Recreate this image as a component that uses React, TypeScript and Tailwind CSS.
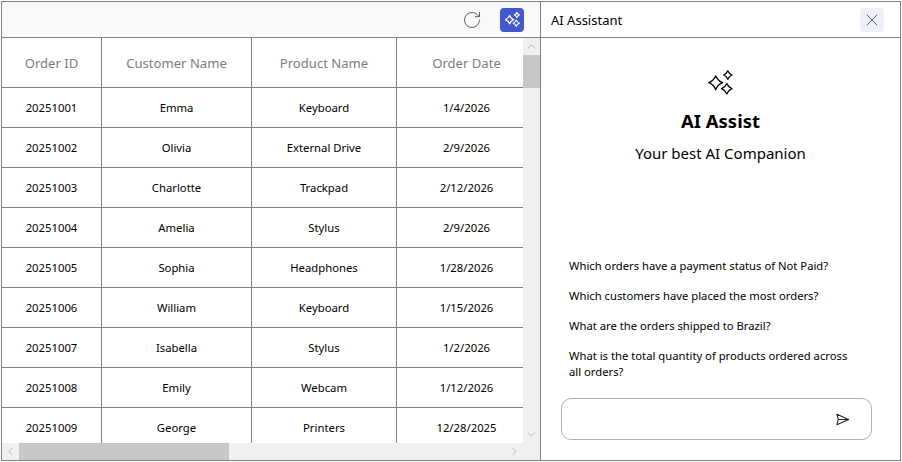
import { ChevronDown, ChevronLeft, ChevronRight, ChevronUp, RotateCw, X } from "lucide-react";

const rows = [
  ["20251001", "Emma", "Keyboard", "1/4/2026"],
  ["20251002", "Olivia", "External Drive", "2/9/2026"],
  ["20251003", "Charlotte", "Trackpad", "2/12/2026"],
  ["20251004", "Amelia", "Stylus", "2/9/2026"],
  ["20251005", "Sophia", "Headphones", "1/28/2026"],
  ["20251006", "William", "Keyboard", "1/15/2026"],
  ["20251007", "Isabella", "Stylus", "1/2/2026"],
  ["20251008", "Emily", "Webcam", "1/12/2026"],
  ["20251009", "George", "Printers", "12/28/2025"],
];

const prompts = [
  "Which orders have a payment status of Not Paid?",
  "Which customers have placed the most orders?",
  "What are the orders shipped to Brazil?",
  "What is the total quantity of products ordered across all orders?",
];

// four-point star with slightly hollow sides
function star(x: number, y: number, r: number) {
  const c = r * 0.28;
  return `M${x} ${y - r} Q${x + c} ${y - c} ${x + r} ${y} Q${x + c} ${y + c} ${x} ${y + r} Q${x - c} ${y + c} ${x - r} ${y} Q${x - c} ${y - c} ${x} ${y - r} Z`;
}

function Sparkles({ className, width = 1.3 }: { className?: string; width?: number }) {
  return (
    <svg viewBox="0 0 25 25" fill="none" stroke="currentColor" strokeWidth={width} strokeLinejoin="round" className={className}>
      <path d={star(7.7, 12.7, 7)} />
      <path d={star(19.8, 5, 4.2)} />
      <path d={star(18.8, 18.7, 5.2)} />
    </svg>
  );
}

export default function App() {
  const cols = "grid grid-cols-[100px_150px_145px_140px] w-[535px]";

  return (
    <div className="w-[902px] h-[462px] pl-px pt-px bg-white font-['Noto_Sans',sans-serif] text-black overflow-hidden">
      <div className="w-[900px] h-[460px] border border-[#808080] flex">
        {/* Grid side */}
        <div className="w-[539px] shrink-0 flex flex-col border-r border-[#808080]">
          <div className="h-9 shrink-0 bg-[#f9f9f9] border-b border-[#808080] flex items-center justify-end gap-[18px] pr-4">
            <RotateCw size={20} strokeWidth={1.1} className="text-[#555]" />
            <button className="w-6 h-6 rounded bg-[#4358cf] flex items-center justify-center text-white">
              <Sparkles className="w-[15px] h-[15px]" width={2} />
            </button>
          </div>

          <div className="flex-1 min-h-0 flex">
            <div className="flex-1 min-w-0 overflow-hidden">
              <div className={`${cols} h-[50px] border-b border-[#808080]`}>
                {["Order ID", "Customer Name", "Product Name", "Order Date"].map((h) => (
                  <div key={h} className="flex items-center justify-center border-r border-[#808080] text-[13.1px] text-[#7d7d7d] pt-0.5">
                    {h}
                  </div>
                ))}
              </div>
              {rows.map((r) => (
                <div key={r[0]} className={`${cols} h-10 border-b border-[#808080]`}>
                  {r.map((c) => (
                    <div key={c} className="flex items-center justify-center border-r border-[#808080] text-[11.3px] pt-px">
                      {c}
                    </div>
                  ))}
                </div>
              ))}
            </div>
            <div className="w-[17px] shrink-0 bg-[#f0f0f0] flex flex-col items-center">
              <div className="h-[17px] flex items-center justify-center">
                <ChevronUp size={13} strokeWidth={1.5} className="text-[#a6a6a6]" />
              </div>
              <div className="w-full h-[33px] bg-[#c8c8c8]" />
              <div className="flex-1" />
              <div className="h-[17px] flex items-center justify-center">
                <ChevronDown size={13} strokeWidth={1.5} className="text-[#a6a6a6]" />
              </div>
            </div>
          </div>

          <div className="h-[17px] shrink-0 bg-[#f0f0f0] flex items-center">
            <div className="w-[17px] flex items-center justify-center">
              <ChevronLeft size={13} strokeWidth={1.5} className="text-[#a6a6a6]" />
            </div>
            <div className="w-[210px] h-full bg-[#c8c8c8]" />
            <div className="flex-1" />
            <div className="w-[17px] flex items-center justify-center mr-[17px]">
              <ChevronRight size={13} strokeWidth={1.5} className="text-[#a6a6a6]" />
            </div>
          </div>
        </div>

        {/* Assistant side */}
        <div className="flex-1 min-w-0 flex flex-col">
          <div className="h-9 shrink-0 border-b border-[#808080] flex items-center justify-between pl-[10px] pr-4">
            <span className="text-[13px] pt-0.5">AI Assistant</span>
            <button className="w-6 h-6 rounded bg-[#edf0fb] flex items-center justify-center text-[#555]">
              <X size={20} strokeWidth={1.1} />
            </button>
          </div>

          <div className="flex flex-col items-center pt-[32px]">
            <Sparkles className="w-[25px] h-[25px]" />
            <h1 className="text-[18.5px] font-bold leading-[26px] mt-[13px]">AI Assist</h1>
            <p className="text-[15px] leading-5 mt-[9px]">Your best AI Companion</p>
          </div>

          <div className="flex-1" />

          <div className="flex flex-col gap-[14px] pl-[28px] pr-[50px] text-[11.25px] leading-4">
            {prompts.map((p) => (
              <div key={p}>{p}</div>
            ))}
          </div>

          <div className="mt-[18px] mb-5 ml-5 mr-[28px] h-[42px] rounded-[10px] border border-[#b0b0b0] flex items-center justify-end pr-[21px]">
            <svg viewBox="0 0 16 16" fill="none" stroke="#222" strokeWidth="1.1" strokeLinejoin="round" className="w-[15px] h-[15px]">
              <path d="M2 2.5 L14.5 8 L2 13.5 L3.5 8 Z" />
              <path d="M3.5 8 H14.5" />
            </svg>
          </div>
        </div>
      </div>
    </div>
  );
}
